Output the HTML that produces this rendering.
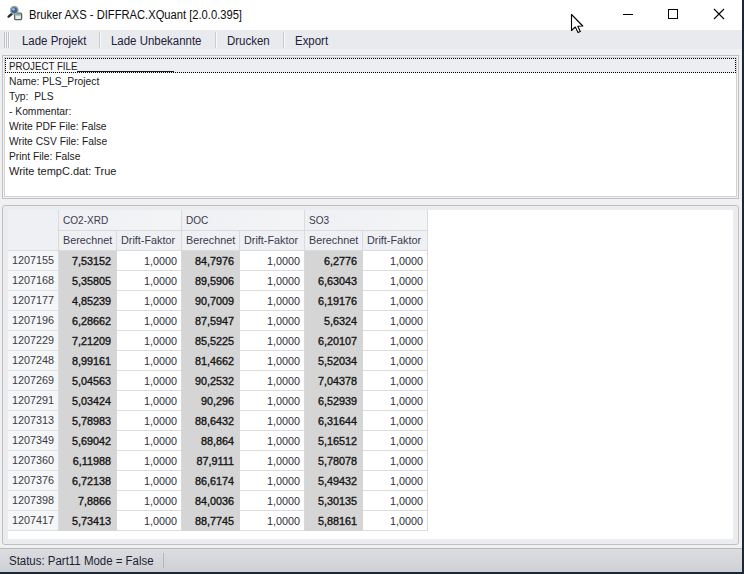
<!DOCTYPE html>
<html><head><meta charset="utf-8">
<style>
*{margin:0;padding:0;box-sizing:border-box}
html,body{width:744px;height:574px;overflow:hidden}
body{position:relative;background:#f0f0f0;font-family:"Liberation Sans",sans-serif;color:#1a1a1a}
.a{position:absolute}
#title{left:0;top:0;width:742px;height:30px;background:#fff}
#title .t{left:29px;top:8px;font-size:12px;color:#0c0c0c;white-space:nowrap;transform:scaleX(0.931);transform-origin:0 0}
#rb{left:742px;top:0;width:2px;height:574px;background:#1d2733}
#bb{left:0;top:572px;width:744px;height:2px;background:#1d2733}
#tb{left:0;top:30px;width:742px;height:25px;background:linear-gradient(#e9eaed 0,#e9eaed 19px,#eff0f2 19px)}
.grip{top:32px;width:1px;height:16px;background:#bfc1c5}
.btn{top:34px;font-size:12px;color:#22203a;white-space:nowrap;transform:scaleX(0.955);transform-origin:0 0}
.sep{top:32px;width:1px;height:16px;background:#c8cacd}
#txt{left:2px;top:55px;width:737px;height:144px;background:#f3f3f4;border:1px solid #bfc1c4}
#txi{left:4px;top:57px;width:733px;height:140px;border:1px solid #d0d2d5;background:#fff}
.ln{left:9px;font-size:11px;color:#1a1a1a;white-space:nowrap;transform:scaleX(0.935);transform-origin:0 0}
#focus{left:5px;top:58px;width:731px;height:15px;background:#eceef1;border:1px dotted #000}
#grid{left:2px;top:205px;width:737px;height:340px;background:#ebecef;border:1px solid #bdbfc2;border-radius:3px}
#gw{left:8px;top:210px;width:725px;height:329px;background:#fff}
.gh{background:#eef0f3;color:#3a3a4c;font-size:10.8px;white-space:nowrap;border-right:1px solid #d9dbde;border-bottom:1px solid #d9dbde}
.h1{top:210px;height:21px;padding:4px 0 0 4px;background:linear-gradient(90deg,#eff0f3,#f3f4f6)}
.h2{top:231px;height:20px;padding:3px 0 0 4px}
.rh{left:8px;width:51px;height:20px;background:#f5f6f8;color:#3a3a44;font-size:10.8px;text-align:right;padding:3px 4px 0 0;border-bottom:1px solid #dfe1e4;border-right:1px solid #d9dbde}
.cb{height:20px;background:#d5d5d5;color:#151515;-webkit-text-stroke:0.35px #151515;font-size:10.8px;text-align:right;padding:4px 5px 0 0;border-bottom:1px solid #d5d5d5;border-right:1px solid #d5d5d5}
.cw{height:20px;background:#fff;color:#2e2e38;font-size:10.8px;text-align:right;padding:4px 4px 0 0;border-bottom:1px solid #dcdcdc;border-right:1px solid #d9d9d9}
#status{left:0;top:548px;width:742px;height:24px;border-top:1px solid #b8babe;background:linear-gradient(#dcdde1,#cdd0d5)}
#status .t{left:9px;top:5px;font-size:12px;color:#1e1e2e;white-space:nowrap;transform:scaleX(0.954);transform-origin:0 0}
</style></head><body>
<div id="title" class="a">
  <svg class="a" style="left:4px;top:4px" width="22" height="22" viewBox="0 0 22 22">
    <rect x="10.6" y="9.2" width="7" height="6.4" rx="1.2" fill="#e4ecec" stroke="#5a5e62" stroke-width="1.3"/>
    <rect x="11.6" y="10.2" width="5" height="1.3" fill="#6aa88a"/>
    <line x1="4.6" y1="12.6" x2="8.4" y2="9.3" stroke="#2a2a2a" stroke-width="2.4" stroke-linecap="round"/>
    <circle cx="10.3" cy="6.2" r="3.7" fill="#3f6688" stroke="#9aa6b2" stroke-width="1.4"/>
    <circle cx="9.5" cy="5.3" r="1.3" fill="#9ec0dc"/>
  </svg>
  <div class="a t">Bruker AXS - DIFFRAC.XQuant [2.0.0.395]</div>
  <svg class="a" style="left:560px;top:0" width="182" height="30" viewBox="560 0 182 30">
    <line x1="623" y1="14.5" x2="633" y2="14.5" stroke="#000" stroke-width="1"/>
    <rect x="668.5" y="9.5" width="9" height="9" fill="none" stroke="#000" stroke-width="1"/>
    <path d="M714 9 L724 19 M724 9 L714 19" stroke="#000" stroke-width="1.1"/>
  </svg>
</div>
<div id="rb" class="a"></div>
<div id="tb" class="a"></div>
<div class="a grip" style="left:4px"></div>
<div class="a grip" style="left:6px"></div>
<div class="a grip" style="left:8px"></div>
<div class="a grip" style="left:5px;background:#f6f7f8"></div>
<div class="a grip" style="left:7px;background:#f6f7f8"></div>
<div class="a grip" style="left:9px;background:#f6f7f8"></div>
<div class="a btn" style="left:22px">Lade Projekt</div>
<div class="a sep" style="left:99px"></div><div class="a sep" style="left:100px;background:#f8f9fa"></div>
<div class="a btn" style="left:111px">Lade Unbekannte</div>
<div class="a sep" style="left:215px"></div><div class="a sep" style="left:216px;background:#f8f9fa"></div>
<div class="a btn" style="left:227px">Drucken</div>
<div class="a sep" style="left:283px"></div><div class="a sep" style="left:284px;background:#f8f9fa"></div>
<div class="a btn" style="left:295px">Export</div>

<div id="txt" class="a"></div><div id="txi" class="a"></div>
<div id="focus" class="a"></div>
<div class="a" style="left:6px;top:59px;width:71px;height:13px;background:#f9f9fa"></div>
<div class="a ln" style="top:60px;transform:scaleX(0.884)">PROJECT FILE</div>
<div class="a" style="left:77px;top:71px;width:97px;height:1px;background:#1a1a20"></div>
<div class="a ln" style="top:75px">Name: PLS_Project</div>
<div class="a ln" style="top:90px">Typ:&nbsp; PLS</div>
<div class="a ln" style="top:105px">- Kommentar:</div>
<div class="a ln" style="top:120px">Write PDF File: False</div>
<div class="a ln" style="top:135px">Write CSV File: False</div>
<div class="a ln" style="top:150px">Print File: False</div>
<div class="a ln" style="top:165px;transform:none">Write tempC.dat: True</div>

<div id="grid" class="a"></div>
<div id="gw" class="a"></div>
<div class="a gh" style="left:8px;top:210px;width:51px;height:41px"></div>
<div class="a gh h1" style="left:59px;width:123px"><span style="display:inline-block;transform:scaleX(0.93);transform-origin:0 0">CO2-XRD</span></div>
<div class="a gh h2" style="left:59px;width:58px">Berechnet</div>
<div class="a gh h2" style="left:117px;width:65px">Drift-Faktor</div>
<div class="a gh h1" style="left:182px;width:123px"><span style="display:inline-block;transform:scaleX(0.93);transform-origin:0 0">DOC</span></div>
<div class="a gh h2" style="left:182px;width:58px">Berechnet</div>
<div class="a gh h2" style="left:240px;width:65px">Drift-Faktor</div>
<div class="a gh h1" style="left:305px;width:123px"><span style="display:inline-block;transform:scaleX(0.93);transform-origin:0 0">SO3</span></div>
<div class="a gh h2" style="left:305px;width:58px">Berechnet</div>
<div class="a gh h2" style="left:363px;width:65px">Drift-Faktor</div>
<div class="a rh" style="top:251px">1207155</div>
<div class="a cb" style="left:59px;top:251px;width:58px">7,53152</div>
<div class="a cw" style="left:117px;top:251px;width:65px">1,0000</div>
<div class="a cb" style="left:182px;top:251px;width:58px">84,7976</div>
<div class="a cw" style="left:240px;top:251px;width:65px">1,0000</div>
<div class="a cb" style="left:305px;top:251px;width:58px">6,2776</div>
<div class="a cw" style="left:363px;top:251px;width:65px">1,0000</div>
<div class="a rh" style="top:271px">1207168</div>
<div class="a cb" style="left:59px;top:271px;width:58px">5,35805</div>
<div class="a cw" style="left:117px;top:271px;width:65px">1,0000</div>
<div class="a cb" style="left:182px;top:271px;width:58px">89,5906</div>
<div class="a cw" style="left:240px;top:271px;width:65px">1,0000</div>
<div class="a cb" style="left:305px;top:271px;width:58px">6,63043</div>
<div class="a cw" style="left:363px;top:271px;width:65px">1,0000</div>
<div class="a rh" style="top:291px">1207177</div>
<div class="a cb" style="left:59px;top:291px;width:58px">4,85239</div>
<div class="a cw" style="left:117px;top:291px;width:65px">1,0000</div>
<div class="a cb" style="left:182px;top:291px;width:58px">90,7009</div>
<div class="a cw" style="left:240px;top:291px;width:65px">1,0000</div>
<div class="a cb" style="left:305px;top:291px;width:58px">6,19176</div>
<div class="a cw" style="left:363px;top:291px;width:65px">1,0000</div>
<div class="a rh" style="top:311px">1207196</div>
<div class="a cb" style="left:59px;top:311px;width:58px">6,28662</div>
<div class="a cw" style="left:117px;top:311px;width:65px">1,0000</div>
<div class="a cb" style="left:182px;top:311px;width:58px">87,5947</div>
<div class="a cw" style="left:240px;top:311px;width:65px">1,0000</div>
<div class="a cb" style="left:305px;top:311px;width:58px">5,6324</div>
<div class="a cw" style="left:363px;top:311px;width:65px">1,0000</div>
<div class="a rh" style="top:331px">1207229</div>
<div class="a cb" style="left:59px;top:331px;width:58px">7,21209</div>
<div class="a cw" style="left:117px;top:331px;width:65px">1,0000</div>
<div class="a cb" style="left:182px;top:331px;width:58px">85,5225</div>
<div class="a cw" style="left:240px;top:331px;width:65px">1,0000</div>
<div class="a cb" style="left:305px;top:331px;width:58px">6,20107</div>
<div class="a cw" style="left:363px;top:331px;width:65px">1,0000</div>
<div class="a rh" style="top:351px">1207248</div>
<div class="a cb" style="left:59px;top:351px;width:58px">8,99161</div>
<div class="a cw" style="left:117px;top:351px;width:65px">1,0000</div>
<div class="a cb" style="left:182px;top:351px;width:58px">81,4662</div>
<div class="a cw" style="left:240px;top:351px;width:65px">1,0000</div>
<div class="a cb" style="left:305px;top:351px;width:58px">5,52034</div>
<div class="a cw" style="left:363px;top:351px;width:65px">1,0000</div>
<div class="a rh" style="top:371px">1207269</div>
<div class="a cb" style="left:59px;top:371px;width:58px">5,04563</div>
<div class="a cw" style="left:117px;top:371px;width:65px">1,0000</div>
<div class="a cb" style="left:182px;top:371px;width:58px">90,2532</div>
<div class="a cw" style="left:240px;top:371px;width:65px">1,0000</div>
<div class="a cb" style="left:305px;top:371px;width:58px">7,04378</div>
<div class="a cw" style="left:363px;top:371px;width:65px">1,0000</div>
<div class="a rh" style="top:391px">1207291</div>
<div class="a cb" style="left:59px;top:391px;width:58px">5,03424</div>
<div class="a cw" style="left:117px;top:391px;width:65px">1,0000</div>
<div class="a cb" style="left:182px;top:391px;width:58px">90,296</div>
<div class="a cw" style="left:240px;top:391px;width:65px">1,0000</div>
<div class="a cb" style="left:305px;top:391px;width:58px">6,52939</div>
<div class="a cw" style="left:363px;top:391px;width:65px">1,0000</div>
<div class="a rh" style="top:411px">1207313</div>
<div class="a cb" style="left:59px;top:411px;width:58px">5,78983</div>
<div class="a cw" style="left:117px;top:411px;width:65px">1,0000</div>
<div class="a cb" style="left:182px;top:411px;width:58px">88,6432</div>
<div class="a cw" style="left:240px;top:411px;width:65px">1,0000</div>
<div class="a cb" style="left:305px;top:411px;width:58px">6,31644</div>
<div class="a cw" style="left:363px;top:411px;width:65px">1,0000</div>
<div class="a rh" style="top:431px">1207349</div>
<div class="a cb" style="left:59px;top:431px;width:58px">5,69042</div>
<div class="a cw" style="left:117px;top:431px;width:65px">1,0000</div>
<div class="a cb" style="left:182px;top:431px;width:58px">88,864</div>
<div class="a cw" style="left:240px;top:431px;width:65px">1,0000</div>
<div class="a cb" style="left:305px;top:431px;width:58px">5,16512</div>
<div class="a cw" style="left:363px;top:431px;width:65px">1,0000</div>
<div class="a rh" style="top:451px">1207360</div>
<div class="a cb" style="left:59px;top:451px;width:58px">6,11988</div>
<div class="a cw" style="left:117px;top:451px;width:65px">1,0000</div>
<div class="a cb" style="left:182px;top:451px;width:58px">87,9111</div>
<div class="a cw" style="left:240px;top:451px;width:65px">1,0000</div>
<div class="a cb" style="left:305px;top:451px;width:58px">5,78078</div>
<div class="a cw" style="left:363px;top:451px;width:65px">1,0000</div>
<div class="a rh" style="top:471px">1207376</div>
<div class="a cb" style="left:59px;top:471px;width:58px">6,72138</div>
<div class="a cw" style="left:117px;top:471px;width:65px">1,0000</div>
<div class="a cb" style="left:182px;top:471px;width:58px">86,6174</div>
<div class="a cw" style="left:240px;top:471px;width:65px">1,0000</div>
<div class="a cb" style="left:305px;top:471px;width:58px">5,49432</div>
<div class="a cw" style="left:363px;top:471px;width:65px">1,0000</div>
<div class="a rh" style="top:491px">1207398</div>
<div class="a cb" style="left:59px;top:491px;width:58px">7,8866</div>
<div class="a cw" style="left:117px;top:491px;width:65px">1,0000</div>
<div class="a cb" style="left:182px;top:491px;width:58px">84,0036</div>
<div class="a cw" style="left:240px;top:491px;width:65px">1,0000</div>
<div class="a cb" style="left:305px;top:491px;width:58px">5,30135</div>
<div class="a cw" style="left:363px;top:491px;width:65px">1,0000</div>
<div class="a rh" style="top:511px">1207417</div>
<div class="a cb" style="left:59px;top:511px;width:58px">5,73413</div>
<div class="a cw" style="left:117px;top:511px;width:65px">1,0000</div>
<div class="a cb" style="left:182px;top:511px;width:58px">88,7745</div>
<div class="a cw" style="left:240px;top:511px;width:65px">1,0000</div>
<div class="a cb" style="left:305px;top:511px;width:58px">5,88161</div>
<div class="a cw" style="left:363px;top:511px;width:65px">1,0000</div>

<div id="status" class="a"><div class="a t">Status: Part11 Mode = False</div></div>
<div class="a" style="left:163px;top:553px;width:1px;height:15px;background:#b4b6ba"></div>
<div id="bb" class="a"></div>
<svg class="a" style="left:565px;top:10px" width="24" height="26" viewBox="565 10 24 26">
  <path d="M571.5 14.5 L571.5 30.5 L575.3 27 L578 32.6 L580.3 31.6 L577.8 26.3 L582.8 26 Z" fill="#fff" stroke="#000" stroke-width="1.1" stroke-linejoin="round"/>
</svg>
</body></html>
